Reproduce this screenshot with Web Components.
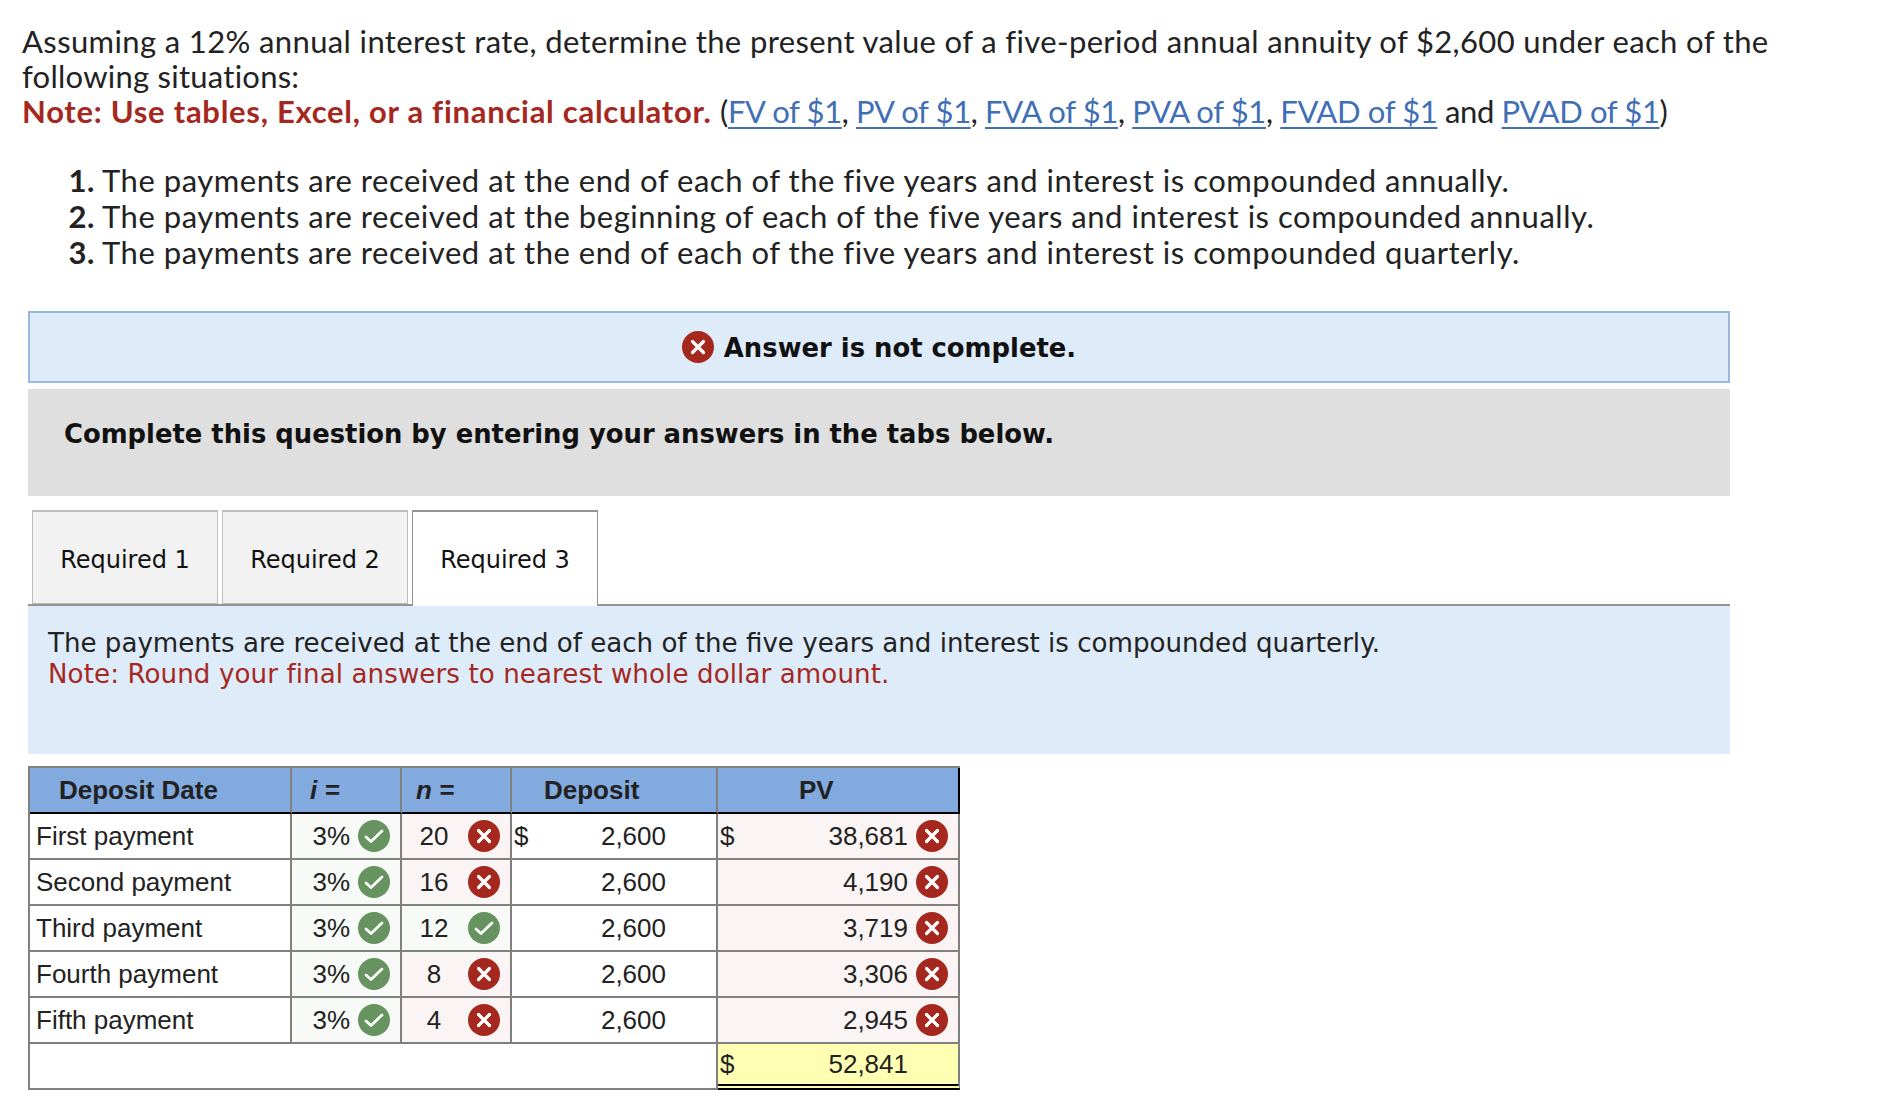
<!DOCTYPE html>
<html>
<head>
<meta charset="utf-8">
<style>
  html, body { margin: 0; background: #fff; }
  body { padding: 24px 0 0 0; width: 1884px; color: #222; font-family: "Lato", sans-serif; }
</style>
</head>
<body>
<exercise-prompt></exercise-prompt>
<answer-banner>Answer is not complete.</answer-banner>
<instruction-bar>Complete this question by entering your answers in the tabs below.</instruction-bar>
<tab-strip>
  <tab-item>Required 1</tab-item>
  <tab-item>Required 2</tab-item>
  <tab-item active>Required 3</tab-item>
</tab-strip>
<tab-panel>
  The payments are received at the end of each of the five years and interest is compounded quarterly.
  <span slot="note">Note: Round your final answers to nearest whole dollar amount.</span>
</tab-panel>
<pv-table></pv-table>

<script>
class StatusMark extends HTMLElement {
  connectedCallback() {
    if (!this.shadowRoot) this.attachShadow({ mode: "open" });
    const ok = this.getAttribute("kind") === "ok";
    this.shadowRoot.innerHTML = `
      <style>
        :host { display: block; width: 32px; height: 32px; flex: none; }
        svg { display: block; }
      </style>
      <svg width="32" height="32" viewBox="0 0 32 32">
        <circle cx="16" cy="16" r="16" fill="${ok ? "#66935f" : "#a5281f"}"/>
        ${ok
          ? '<path d="M8 17l5 4.500L24 11" fill="none" stroke="#fff" stroke-width="2.800" stroke-linecap="round" stroke-linejoin="round"/>'
          : '<path d="M10.500 10.500l11 11M21.500 10.500l-11 11" fill="none" stroke="#fff" stroke-width="3.200" stroke-linecap="round"/>'}
      </svg>`;
  }
}
customElements.define("status-mark", StatusMark);

class ExercisePrompt extends HTMLElement {
  constructor() {
    super();
    this.attachShadow({ mode: "open" });
  }
  connectedCallback() {
    const links = ["FV of $1", "PV of $1", "FVA of $1", "PVA of $1", "FVAD of $1", "PVAD of $1"]
      .map(t => `<a href="#">${t}</a>`);
    const items = [
      "The payments are received at the end of each of the five years and interest is compounded annually.",
      "The payments are received at the beginning of each of the five years and interest is compounded annually.",
      "The payments are received at the end of each of the five years and interest is compounded quarterly."
    ];
    this.shadowRoot.innerHTML = `
      <style>
        :host { display: block; padding: 0 100px 0 22px; font: 31px/35px "Lato", sans-serif; letter-spacing: 0.37px; color: #222; }
        .lead { letter-spacing: 0.25px; }
        .refs { letter-spacing: -0.36px; }
        .note { color: #a5281f; font-weight: 700; letter-spacing: 0.72px; }
        a { color: #3f6fb5; text-decoration: underline; text-decoration-thickness: 2px; text-underline-offset: 4px; }
        ol { list-style: none; margin: 33px 0 0; padding: 0; letter-spacing: 0.53px; }
        li { display: flex; line-height: 36px; }
        b { width: 73px; margin-right: 7px; text-align: right; font-weight: 700; }
      </style>
      <div>Assuming a 12% annual interest rate, determine the present value of a five-period annual annuity of $2,600 under each of the <span class="lead">following situations:</span></div>
      <div><span class="note">Note: Use tables, Excel, or a financial calculator.</span> <span class="refs">(${links.slice(0, 5).join(", ")} and ${links[5]})</span></div>
      <ol>${items.map((t, i) => `<li><b>${i + 1}.</b><span>${t}</span></li>`).join("")}</ol>`;
  }
}
customElements.define("exercise-prompt", ExercisePrompt);

class AnswerBanner extends HTMLElement {
  constructor() {
    super();
    this.attachShadow({ mode: "open" }).innerHTML = `
      <style>
        :host {
          display: flex; align-items: center; justify-content: center; gap: 10px;
          box-sizing: border-box; width: 1702px; height: 72px; margin: 41px 0 0 28px;
          background: #deebf9; border: 2px solid #9ab8de;
          font: 700 25.850px "DejaVu Sans", sans-serif; color: #111;
        }
        slot { display: block; padding-top: 2px; }
      </style>
      <status-mark kind="bad"></status-mark><slot></slot>`;
  }
}
customElements.define("answer-banner", AnswerBanner);

class InstructionBar extends HTMLElement {
  constructor() {
    super();
    this.attachShadow({ mode: "open" }).innerHTML = `
      <style>
        :host {
          display: block; box-sizing: border-box; width: 1702px; height: 107px; margin: 6px 0 0 28px;
          padding: 29px 36px 0; background: #dfdfdf;
          font: 700 25.830px/32px "DejaVu Sans", sans-serif; color: #111;
        }
      </style>
      <slot></slot>`;
  }
}
customElements.define("instruction-bar", InstructionBar);

class TabStrip extends HTMLElement {
  constructor() {
    super();
    this.attachShadow({ mode: "open" }).innerHTML = `
      <style>
        :host {
          display: flex; gap: 4px; box-sizing: border-box; width: 1702px; height: 96px;
          margin: 14px 0 0 28px; padding-left: 4px; border-bottom: 2px solid #949494;
        }
      </style>
      <slot></slot>`;
  }
}
customElements.define("tab-strip", TabStrip);

class TabItem extends HTMLElement {
  constructor() {
    super();
    this.attachShadow({ mode: "open" }).innerHTML = `
      <style>
        :host {
          display: block; box-sizing: border-box; width: 186px; height: 94px; padding-top: 34px;
          text-align: center; background: #f2f2f2; border: 1px solid #bdbdbd; border-top-width: 2px;
          font: 24px/28px "DejaVu Sans", sans-serif; color: #111;
        }
        :host([active]) {
          height: 96px; background: #fff; border-color: #949494; border-bottom: 0; z-index: 1;
        }
      </style>
      <slot></slot>`;
  }
}
customElements.define("tab-item", TabItem);

class TabPanel extends HTMLElement {
  constructor() {
    super();
    this.attachShadow({ mode: "open" }).innerHTML = `
      <style>
        :host {
          display: block; box-sizing: border-box; width: 1702px; height: 148px; margin-left: 28px;
          padding: 22px 20px 0; background: #deebf9;
          font: 26.100px/31px "DejaVu Sans", sans-serif; color: #222;
        }
        ::slotted([slot=note]) { display: block; color: #a5281f; letter-spacing: 0.1px; }
      </style>
      <slot></slot><slot name="note"></slot>`;
  }
}
customElements.define("tab-panel", TabPanel);

class PvTable extends HTMLElement {
  constructor() {
    super();
    this.attachShadow({ mode: "open" });
  }
  connectedCallback() {
    const rows = [
      ["First payment", "20", false, "38,681"],
      ["Second payment", "16", false, "4,190"],
      ["Third payment", "12", true, "3,719"],
      ["Fourth payment", "8", false, "3,306"],
      ["Fifth payment", "4", false, "2,945"]
    ];
    const body = rows.map((r, i) => `
      <tr>
        <td class="label">${r[0]}</td>
        <td class="ok"><div class="pair"><span class="rate">3%</span><status-mark kind="ok"></status-mark></div></td>
        <td class="${r[2] ? "ok" : "bad"}"><div class="pair"><span class="periods">${r[1]}</span><status-mark kind="${r[2] ? "ok" : "bad"}"></status-mark></div></td>
        <td><div class="money deposit"><span>${i === 0 ? "$" : ""}</span><span>2,600</span></div></td>
        <td class="bad"><div class="money"><span>${i === 0 ? "$" : ""}</span><span class="amt">${r[3]}</span><status-mark kind="bad"></status-mark></div></td>
      </tr>`).join("");
    this.shadowRoot.innerHTML = `
      <style>
        :host { display: block; margin: 12px 0 0 28px; width: 932px; font: 26px "Liberation Sans", sans-serif; color: #222; }
        table { border-collapse: separate; border-spacing: 0; table-layout: fixed; width: 932px; border-top: 2px solid #808080; border-left: 2px solid #808080; }
        th, td { box-sizing: border-box; height: 46px; padding: 0; border-right: 2px solid #808080; border-bottom: 2px solid #808080; }
        th { background: #82aadf; border-bottom-color: #000; font-weight: 700; text-align: left; }
        th:last-child { border-right-color: #000; padding-left: 81px; }
        th.var { font-style: italic; padding-left: 18px; }
        th.var.n { padding-left: 14px; }
        th.first { padding-left: 29px; }
        th.dep { padding-left: 32px; }
        td.label { padding-left: 6px; }
        td.ok { background: #f7faf6; }
        td.bad { background: #faf4f4; }
        .pair { display: flex; align-items: center; justify-content: flex-end; gap: 8px; padding-right: 10px; }
        .periods { width: 40px; margin-right: 6px; text-align: center; }
        .money { display: flex; align-items: center; padding: 0 10px 0 2px; }
        .money span:first-child { flex: 1; }
        .money status-mark { margin-left: 8px; }
        .deposit { padding-right: 50px; }
        .amt { white-space: nowrap; }
        td.total { background: #ffffb3; border-bottom: 6px double #000; }
        td.total .money { padding-right: 50px; }
      </style>
      <table>
        <colgroup><col style="width:262px"><col style="width:110px"><col style="width:110px"><col style="width:206px"><col style="width:242px"></colgroup>
        <thead><tr>
          <th class="first">Deposit Date</th><th class="var">i =</th><th class="var n">n =</th><th class="dep">Deposit</th><th>PV</th>
        </tr></thead>
        <tbody>${body}
          <tr><td colspan="4"></td><td class="total"><div class="money"><span>$</span><span>52,841</span></div></td></tr>
        </tbody>
      </table>`;
  }
}
customElements.define("pv-table", PvTable);
</script>
</body>
</html>
